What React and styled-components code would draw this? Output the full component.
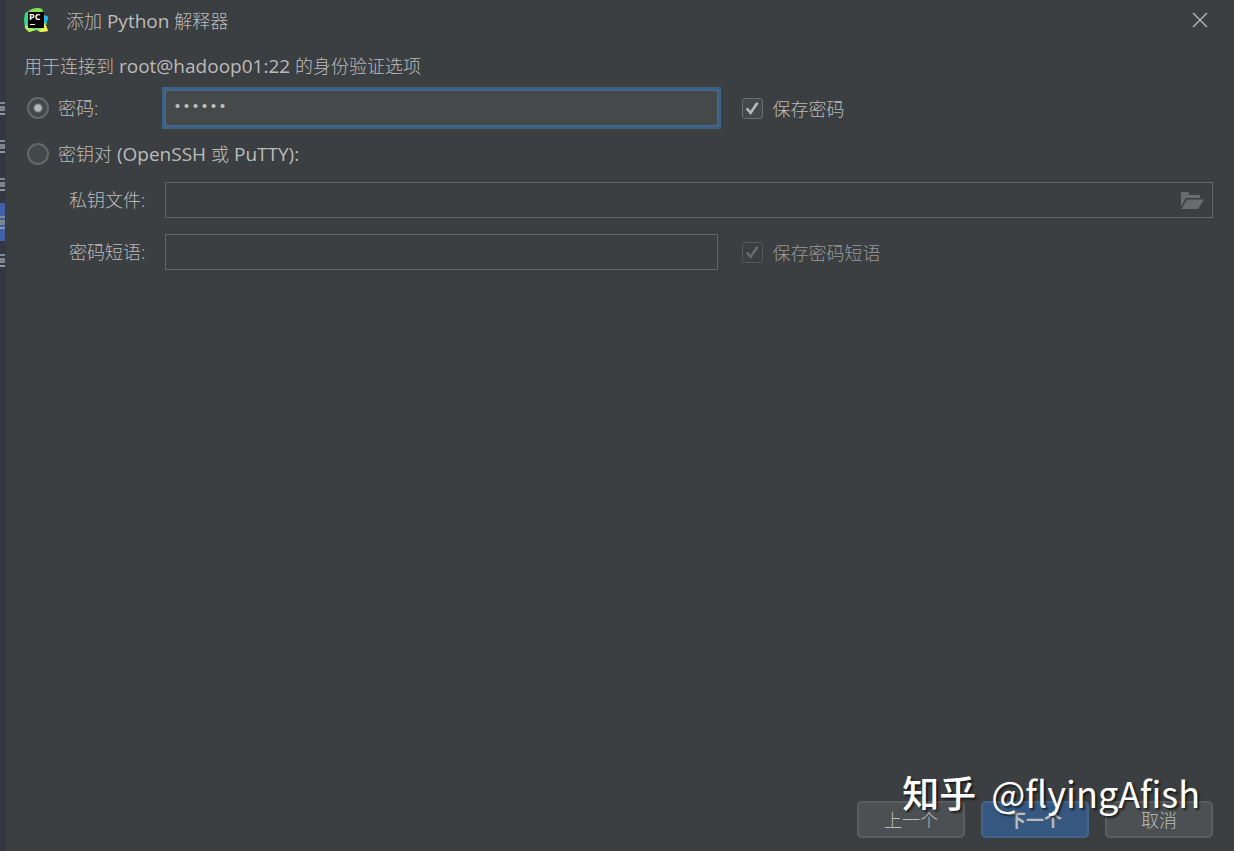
import React, { useState } from "react";
import styled, { createGlobalStyle } from "styled-components";

const GlobalStyle = createGlobalStyle`
  * { box-sizing: border-box; }
  body {
    margin: 0;
    background: #3c3f41;
    color: #bbbbbb;
    font-family: "Open Sans", "Noto Sans CJK SC", sans-serif;
    font-size: 18px;
    font-weight: 300;
    line-height: 24px;
  }
`;

const Page = styled.div`
  position: relative;
  display: flex;
  min-height: 100vh;
`;

const EditorEdge = styled.aside`
  flex: none;
  width: 6px;
  padding-top: 89px;
  background: #343742;
  border-right: 1px solid #373a40;
`;

const EdgeRow = styled.div`
  display: flex;
  align-items: center;
  height: 38px;
  background: ${(p) => (p.$active ? "#4060a8" : "transparent")};
`;

const Dialog = styled.main`
  flex: 1;
  min-width: 0;
  display: flex;
  flex-direction: column;
  padding: 0 21px 13px 18px;
`;

const TitleBar = styled.header`
  display: flex;
  align-items: center;
  height: 41px;
  gap: 18px;
`;

const Title = styled.h1`
  flex: 1;
  margin: 0;
  font-size: 18px;
  font-weight: 300;
`;

const Latin = styled.span`
  font-size: 19px;
  font-weight: 400;
  white-space: pre;
`;

const CloseButton = styled.button`
  display: flex;
  padding: 5px 5px 7px;
  border: 0;
  background: none;
  color: #b4b6b7;
`;

const Intro = styled.p`
  margin: 13px 0 10px;
`;

const Form = styled.form`
  flex: 1;
`;

const Row = styled.div`
  display: grid;
  grid-template-columns: 141px minmax(0, 554fr) minmax(0, 495fr);
  align-items: center;
  height: 40px;
  margin-bottom: ${(p) => p.$gap || 0}px;
`;

const ChoiceRow = styled.div`
  display: flex;
  align-items: center;
  height: 52px;
`;

const Choice = styled.label`
  display: flex;
  align-items: center;
  gap: 9px;
  padding-left: 3px;
  white-space: nowrap;
`;

const Radio = styled.input`
  appearance: none;
  flex: none;
  width: 22px;
  height: 22px;
  margin: 0;
  border: 2px solid #65686a;
  border-radius: 50%;
  background: #43494a;
  &:checked {
    background: radial-gradient(circle, #b4b6b7 3px, #43494a 5px);
  }
`;

const FieldLabel = styled.label`
  padding-left: 45px;
  white-space: nowrap;
`;

const TextField = styled.input`
  display: block;
  width: 100%;
  height: 36px;
  padding: 0 9px;
  border: 1px solid #646769;
  border-radius: 0;
  outline: none;
  background: #3c3f41;
  color: #bbbbbb;
  font: inherit;
`;

const PasswordField = styled(TextField)`
  padding: 0 7px 2px;
  border-color: #466d94;
  background: #45494a;
  box-shadow: 0 0 0 3px #3d6185;
  font-family: "Liberation Mono", monospace;
  font-size: 15px;
`;

const FileField = styled.div`
  grid-column: 2 / 4;
  display: flex;
  align-items: center;
  height: 36px;
  padding-right: 8px;
  border: 1px solid #646769;
`;

const FileInput = styled(TextField)`
  flex: 1;
  height: 34px;
  border: 0;
`;

const BrowseButton = styled.button`
  display: flex;
  padding: 2px 0 0;
  border: 0;
  background: none;
`;

const CheckLabel = styled.label`
  display: flex;
  align-items: center;
  gap: 9px;
  padding-left: 24px;
  color: ${(p) => (p.$dim ? "#999999" : "#bbbbbb")};
  white-space: nowrap;
`;

const CheckText = styled.span`
  padding-top: 2px;
`;

const CheckWrap = styled.span`
  display: grid;
  flex: none;
  & > * { grid-area: 1 / 1; }
  svg { pointer-events: none; }
  input:not(:checked) + svg { visibility: hidden; }
`;

const CheckInput = styled.input`
  appearance: none;
  width: 21px;
  height: 21px;
  margin: 0;
  border: 1px solid #6b6e70;
  border-radius: 3px;
  background: #43494a;
  &:disabled {
    border-color: #54585a;
    background: #3c3f41;
  }
`;

const Footer = styled.footer`
  display: flex;
  justify-content: flex-end;
  gap: 16px;
`;

const DialogButton = styled.button`
  width: 108px;
  height: 37px;
  padding: 0;
  border: 2px solid ${(p) => (p.$primary ? "#43658a" : "#5a5e60")};
  border-radius: 5px;
  background: ${(p) => (p.$primary ? "#365880" : "#4c5052")};
  color: #bbbbbb;
  font: inherit;
  font-weight: ${(p) => (p.$primary ? 700 : 300)};
`;

const Watermark = styled.div`
  position: absolute;
  right: 34px;
  bottom: 33px;
  display: flex;
  align-items: baseline;
  gap: 15px;
  color: #ffffff;
  font-family: "Noto Sans CJK SC", sans-serif;
  font-size: 36px;
  font-weight: 400;
  line-height: 52px;
  text-shadow: 2px 2px 2px rgba(0, 0, 0, 0.6);
  white-space: pre;
  pointer-events: none;
`;

const WatermarkBrand = styled.span`
  font-size: 37px;
  font-weight: 500;
`;

function AppLogo() {
  return (
    <svg width="24" height="25" viewBox="0 0 24 25" aria-hidden="true">
      <defs>
        <linearGradient id="green" x1="0" y1="0" x2="1" y2="1">
          <stop offset="0" stopColor="#2ed987" />
          <stop offset="0.55" stopColor="#39db86" />
          <stop offset="1" stopColor="#f6f34b" />
        </linearGradient>
      </defs>
      <path d="M1 5L8 1L14 0L18 1L20 5L20 7L24 9L22 17L24 23L17 24L12 22L5 24L1 20L0 12Z" fill="url(#green)" />
      <path d="M5 3L8 1L14 0L18 1L19 5L5 5Z" fill="#8be04f" />
      <path d="M20 7L24 9L22 17L20 14Z" fill="#20b8e8" />
      <path d="M20 15L24 23L15 24L18 20Z" fill="#f8f150" />
      <path d="M1 17L7 20L12 22L5 24L1 20Z" fill="#b8ee58" />
      <rect x="4" y="4" width="16" height="16" fill="#000" />
      <text x="5" y="12" fill="#fff" fontFamily="Open Sans, sans-serif" fontSize="9" fontWeight="700">PC</text>
      <rect x="6" y="16" width="5" height="1" fill="#fff" />
    </svg>
  );
}

function CheckMark({ color }) {
  return (
    <svg width="21" height="21" viewBox="0 0 21 21" aria-hidden="true">
      <path d="M4.7 10.4L8.6 14.8L15.5 4.7" fill="none" stroke={color} strokeWidth="2.6" />
    </svg>
  );
}

function FolderIcon() {
  return (
    <svg width="23" height="18" viewBox="0 0 23 18" aria-hidden="true">
      <path d="M0 0H7L9 3H19V6H5L0 15Z" fill="#686c6e" />
      <path d="M6 7.5H23L17 17H0.5Z" fill="#686c6e" />
    </svg>
  );
}

function EdgeMark() {
  return (
    <svg width="5" height="13" viewBox="0 0 5 13" aria-hidden="true">
      <rect y="0" width="5" height="2" fill="#7f8b90" />
      <rect y="4" width="5" height="5" fill="#7a868c" />
      <rect y="11" width="5" height="2" fill="#8b989f" />
    </svg>
  );
}

function Check({ label, ...input }) {
  return (
    <CheckLabel $dim={input.disabled}>
      <CheckWrap>
        <CheckInput type="checkbox" defaultChecked {...input} />
        <CheckMark color={input.disabled ? "#666a6c" : "#b8babb"} />
      </CheckWrap>
      <CheckText>{label}</CheckText>
    </CheckLabel>
  );
}

export default function App() {
  const [mode, setMode] = useState("password");
  return (
    <Page>
      <GlobalStyle />
      <EditorEdge>
        {[0, 1, 2, 3, 4].map((i) => (
          <EdgeRow key={i} $active={i === 3}><EdgeMark /></EdgeRow>
        ))}
      </EditorEdge>
      <Dialog>
        <TitleBar>
          <AppLogo />
          <Title>添加<Latin> Python </Latin>解释器</Title>
          <CloseButton type="button" aria-label="关闭">
            <svg width="16" height="16" viewBox="0 0 16 16">
              <path d="M1 1L15 15M15 1L1 15" stroke="currentColor" strokeWidth="1.4" />
            </svg>
          </CloseButton>
        </TitleBar>
        <Form>
          <Intro>用于连接到<Latin> root@hadoop01:22 </Latin>的身份验证选项</Intro>
          <Row>
            <Choice>
              <Radio type="radio" name="auth" checked={mode === "password"} onChange={() => setMode("password")} />
              密码:
            </Choice>
            <PasswordField type="password" aria-label="密码" defaultValue="123456" />
            <Check label="保存密码" />
          </Row>
          <ChoiceRow>
            <Choice>
              <Radio type="radio" name="auth" checked={mode === "key"} onChange={() => setMode("key")} />
              <span>密钥对<Latin> (OpenSSH </Latin>或<Latin> PuTTY):</Latin></span>
            </Choice>
          </ChoiceRow>
          <Row $gap={12}>
            <FieldLabel htmlFor="key-file">私钥文件:</FieldLabel>
            <FileField>
              <FileInput id="key-file" type="text" disabled />
              <BrowseButton type="button" aria-label="浏览" disabled><FolderIcon /></BrowseButton>
            </FileField>
          </Row>
          <Row>
            <FieldLabel htmlFor="passphrase">密码短语:</FieldLabel>
            <TextField id="passphrase" type="password" disabled />
            <Check label="保存密码短语" disabled />
          </Row>
        </Form>
        <Footer>
          <DialogButton type="button">上一个</DialogButton>
          <DialogButton type="button" $primary>下一个</DialogButton>
          <DialogButton type="button">取消</DialogButton>
        </Footer>
      </Dialog>
      <Watermark><WatermarkBrand>知乎</WatermarkBrand><span>@flyingAfish</span></Watermark>
    </Page>
  );
}
